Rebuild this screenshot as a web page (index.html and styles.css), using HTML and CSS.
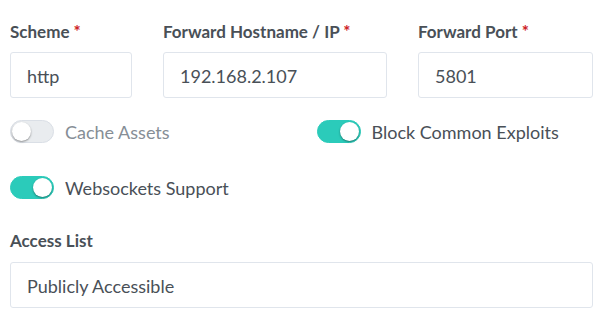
FILE: index.html
```html
<!DOCTYPE html>
<html lang="en">

<head>
    <meta charset="UTF-8">
    <meta name="viewport" content="width=device-width, initial-scale=1.0">
    <title>Proxy Host</title>
    <link rel="stylesheet" href="styles.css">
</head>

<body>
    <div class="form">
        <div class="row row-fields">
            <div class="form-group">
                <label class="form-label">Scheme <span class="required">*</span></label>
                <div class="form-control">http</div>
            </div>
            <div class="form-group">
                <label class="form-label">Forward Hostname / IP <span class="required">*</span></label>
                <div class="form-control">192.168.2.107</div>
            </div>
            <div class="form-group">
                <label class="form-label">Forward Port <span class="required">*</span></label>
                <div class="form-control">5801</div>
            </div>
        </div>

        <div class="row row-switches">
            <label class="switch">
                <span class="switch-indicator"></span>
                <span class="switch-text muted">Cache Assets</span>
            </label>
            <label class="switch">
                <span class="switch-indicator on"></span>
                <span class="switch-text">Block Common Exploits</span>
            </label>
        </div>

        <div class="row row-single">
            <label class="switch">
                <span class="switch-indicator on"></span>
                <span class="switch-text">Websockets Support</span>
            </label>
        </div>

        <div class="form-group access">
            <label class="form-label">Access List</label>
            <div class="form-control">Publicly Accessible</div>
        </div>
    </div>
</body>

</html>
```

FILE: styles.css
```css
* {
    margin: 0;
    padding: 0;
    box-sizing: border-box;
}

body {
    font-family: Lato, 'Noto Sans', sans-serif;
    background: #fff;
    color: #495057;
}

.form {
    padding: 22px 16px 0 10px;
}

.row {
    display: grid;
}

.row-fields {
    grid-template-columns: 122px 224px 1fr;
    column-gap: 31px;
}

.form-label {
    display: block;
    font-size: 17px;
    font-weight: 700;
    line-height: 20px;
    margin-bottom: 10px;
    white-space: nowrap;
}

.required {
    color: #cd201f;
}

.form-control {
    height: 46px;
    border: 1px solid #e0e5ec;
    border-radius: 3px;
    padding: 1px 16px 0;
    font-size: 18px;
    line-height: 44px;
    color: #495057;
}

.row-switches {
    grid-template-columns: 1fr 1fr;
    column-gap: 30px;
    margin-top: 22px;
}

.row-single {
    margin-top: 33px;
}

.switch {
    display: flex;
    align-items: center;
    gap: 11px;
    height: 23px;
}

.switch-indicator {
    position: relative;
    width: 44px;
    height: 23px;
    border-radius: 12px;
    background: #e9ecef;
    border: 1px solid #dadfe6;
    flex-shrink: 0;
}

.switch-indicator::after {
    content: '';
    position: absolute;
    top: 1px;
    left: 1px;
    width: 19px;
    height: 19px;
    border-radius: 50%;
    background: #fff;
    box-shadow: 0 1px 2px rgba(0, 0, 0, 0.4);
}

.switch-indicator.on {
    background: #2bcbba;
    border-color: #2bcbba;
}

.switch-indicator.on::after {
    left: 22px;
}

.switch-text {
    font-size: 18px;
    line-height: 23px;
    padding-top: 2px;
    color: #495057;
}

.switch-text.muted {
    color: #868e96;
}

.access {
    margin-top: 32px;
}

.access .form-label {
    margin-bottom: 11px;
}
```
